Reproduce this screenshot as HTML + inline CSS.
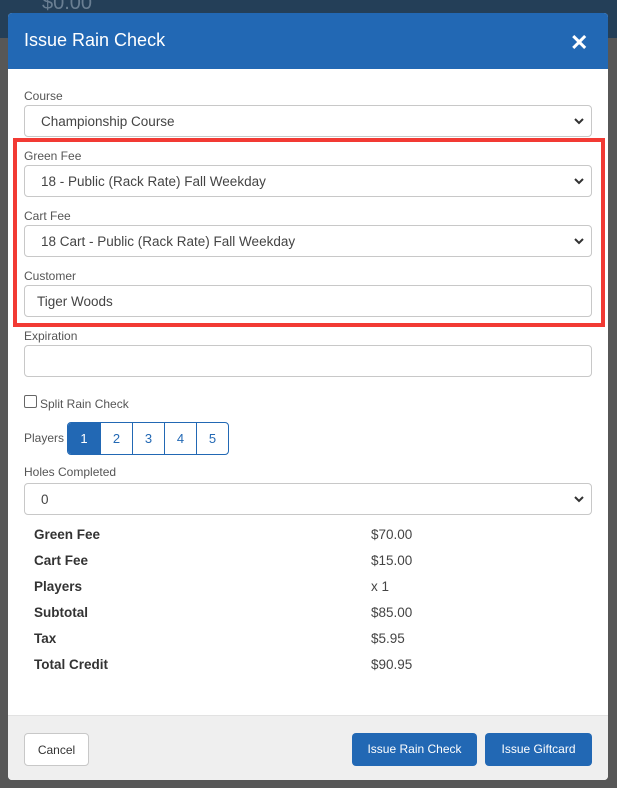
<!DOCTYPE html>
<html><head><style>
*{box-sizing:border-box;margin:0;padding:0}
body{width:617px;height:788px;background:#575757;font-family:"Liberation Sans",sans-serif;position:relative;overflow:hidden}
.top{position:absolute;left:0;top:0;width:617px;height:38px;background:#243f58}
.top span{position:absolute;left:42px;top:-8px;color:#6a7f93;font-size:20px}
.modal{position:absolute;left:8px;top:13px;width:600px;height:767px;background:#fff;border-radius:4px;overflow:hidden}
.hdr{height:56px;background:#2268b4;color:#fff;position:relative}
.hdr h1{position:absolute;left:16px;top:17px;font-size:18px;font-weight:normal}
.hdr .x{position:absolute;left:562px;top:17px;font-size:22px;font-weight:bold}
.lbl{position:absolute;left:16px;font-size:12px;color:#555;white-space:nowrap}
.inp{position:absolute;left:16px;width:568px;height:32px;border:1px solid #c8c8c8;border-radius:4px;font-size:13.5px;color:#444;padding:8px 0 0 16px}
.inp.t{padding-left:12px}
.chev{position:absolute;right:6px;top:10px;width:12px;height:10px}
.red{position:absolute;left:5px;top:125px;width:592px;height:189px;border:4px solid #f23a34}
.pl{position:absolute;left:59px;top:409px;height:33px;display:flex;border:1px solid #2268b4;border-radius:4px;overflow:hidden}
.pl div{width:32px;text-align:center;font-size:13px;color:#2268b4;line-height:31px;border-left:1px solid #2268b4}
.pl div:first-child{border-left:none;background:#2268b4;color:#fff}
.row{position:absolute;left:26px;width:500px;font-size:13.5px;color:#333;white-space:nowrap}
.row b{position:absolute;left:0;white-space:nowrap}
.row span{position:absolute;left:337px;color:#444;white-space:nowrap}
.ftr{position:absolute;left:0;top:702px;width:600px;height:65px;background:#efefef;border-top:1px solid #e2e2e2}
.btn{position:absolute;top:17px;height:33px;border-radius:4px;font-size:12px;line-height:33px;text-align:center}
</style></head><body>
<div class="top"><span>$0.00</span></div>
<div class="modal">
<div class="hdr"><h1>Issue Rain Check</h1><div class="x">✕</div></div>
<div class="lbl" style="top:76px">Course</div>
<div class="inp" style="top:92px">Championship Course<svg class="chev" viewBox="0 0 12 10"><path d="M2 3l4 4 4-4" stroke="#333" stroke-width="2" fill="none"/></svg></div>
<div class="red"></div>
<div class="lbl" style="top:136px">Green Fee</div>
<div class="inp" style="top:152px">18 - Public (Rack Rate) Fall Weekday<svg class="chev" viewBox="0 0 12 10"><path d="M2 3l4 4 4-4" stroke="#333" stroke-width="2" fill="none"/></svg></div>
<div class="lbl" style="top:196px">Cart Fee</div>
<div class="inp" style="top:212px">18 Cart - Public (Rack Rate) Fall Weekday<svg class="chev" viewBox="0 0 12 10"><path d="M2 3l4 4 4-4" stroke="#333" stroke-width="2" fill="none"/></svg></div>
<div class="lbl" style="top:256px">Customer</div>
<div class="inp t" style="top:272px">Tiger Woods</div>
<div class="lbl" style="top:316px">Expiration</div>
<div class="inp" style="top:332px"></div>
<div style="position:absolute;left:16px;top:382px;width:13px;height:13px;border:1px solid #666;border-radius:2px"></div>
<div class="lbl" style="top:384px;left:32px">Split Rain Check</div>
<div class="lbl" style="top:418px">Players</div>
<div class="pl"><div>1</div><div>2</div><div>3</div><div>4</div><div>5</div></div>
<div class="lbl" style="top:452px">Holes Completed</div>
<div class="inp" style="top:470px">0<svg class="chev" viewBox="0 0 12 10"><path d="M2 3l4 4 4-4" stroke="#333" stroke-width="2" fill="none"/></svg></div>
<div class="row" style="top:514px"><b>Green Fee</b><span>$70.00</span></div>
<div class="row" style="top:540px"><b>Cart Fee</b><span>$15.00</span></div>
<div class="row" style="top:566px"><b>Players</b><span>x 1</span></div>
<div class="row" style="top:592px"><b>Subtotal</b><span>$85.00</span></div>
<div class="row" style="top:618px"><b>Tax</b><span>$5.95</span></div>
<div class="row" style="top:644px"><b>Total Credit</b><span>$90.95</span></div>
<div class="ftr">
<div class="btn" style="left:16px;width:65px;background:#fff;border:1px solid #c8c8c8;color:#333">Cancel</div>
<div class="btn" style="left:344px;width:125px;background:#2268b4;color:#fff">Issue Rain Check</div>
<div class="btn" style="left:477px;width:107px;background:#2268b4;color:#fff">Issue Giftcard</div>
</div>
</div>
</body></html>
